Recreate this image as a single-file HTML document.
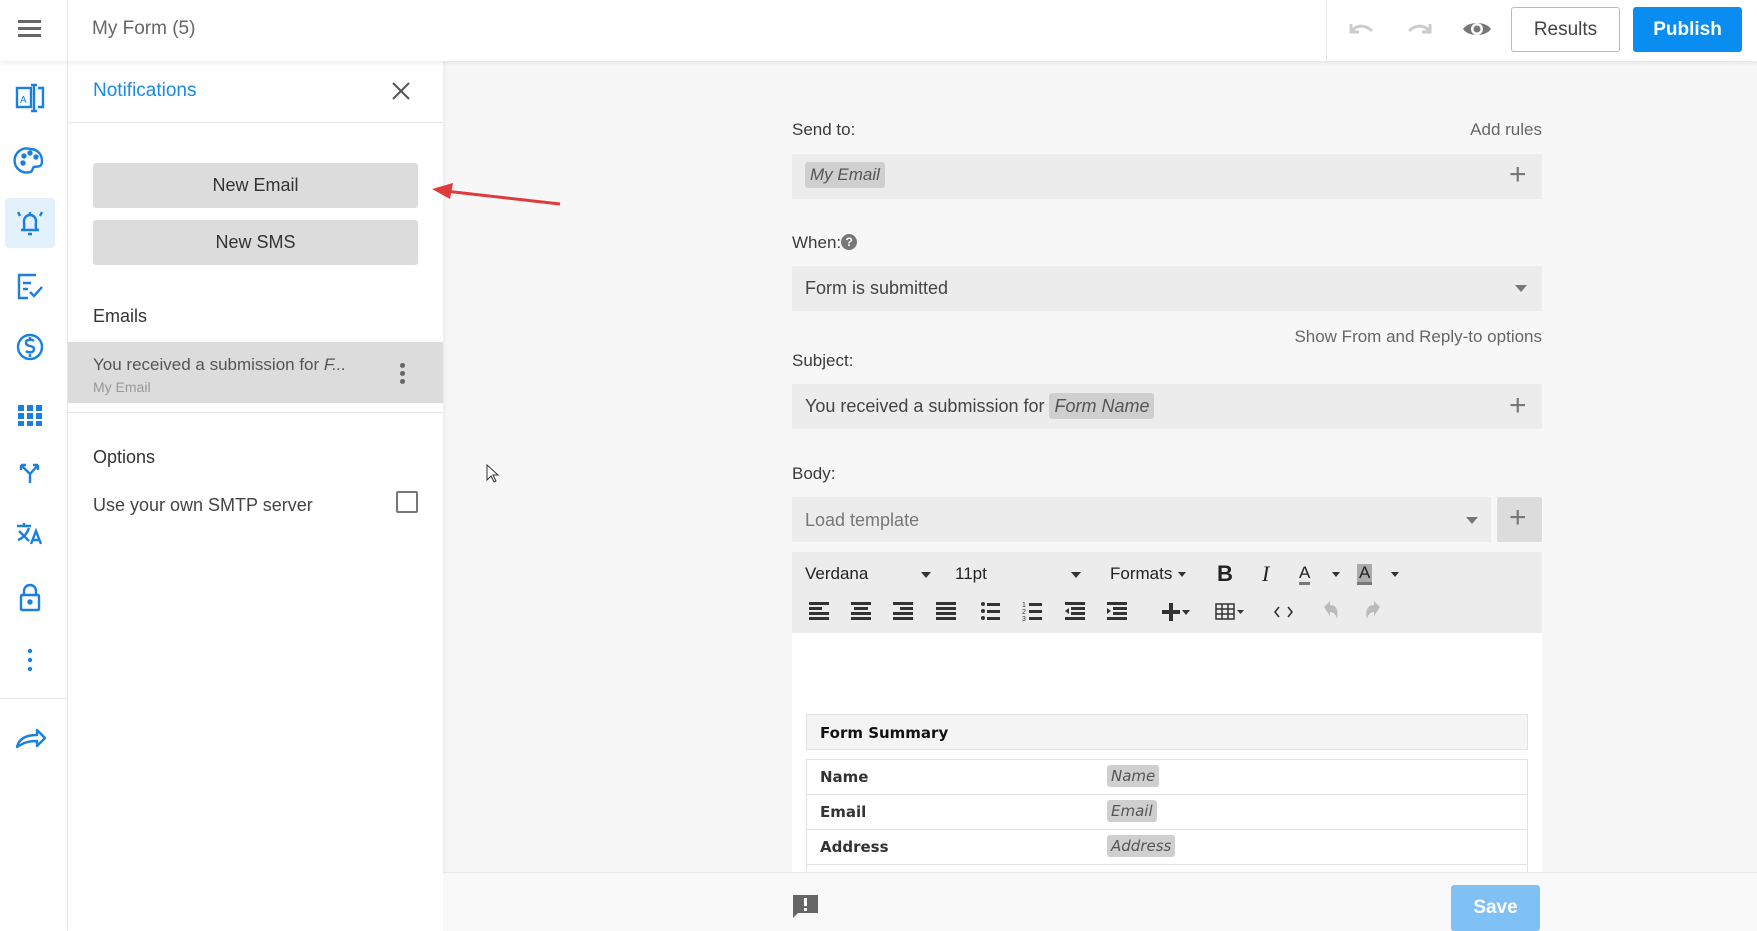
<!DOCTYPE html>
<html><head><meta charset="utf-8"><style>
*{box-sizing:border-box;margin:0;padding:0}
body{width:1757px;height:931px;overflow:hidden;background:#f7f7f7;font-family:"Liberation Sans",sans-serif;position:relative;color:#333}
.a{position:absolute}
.lbl{font-size:17px;color:#3a3a3a}
.fld{background:#ececec;height:45px}
.tag{background:#cfcfcf;border-radius:3px;font-style:italic;color:#555;padding:3px 5px}
.plus{font-size:30px;color:#777;font-weight:300}
.tb{position:absolute;font-size:17px;color:#222}
</style></head><body>
<div class="a" style="left:0;top:0;width:1757px;height:61px;background:#fff;box-shadow:0 2px 4px rgba(0,0,0,.08);z-index:2"></div>
<div class="a" style="left:18px;top:20px;width:23px;height:18px;z-index:3">
<div style="height:3px;background:#666;margin-bottom:4px"></div><div style="height:3px;background:#666;margin-bottom:4px"></div><div style="height:3px;background:#666"></div></div>
<div class="a" style="left:67px;top:0;width:1px;height:61px;background:#e6e6e6;z-index:3"></div>
<div class="a" style="left:92px;top:18px;font-size:19px;color:#666;z-index:3">My Form (5)</div>
<div class="a" style="left:1326px;top:0;width:1px;height:61px;background:#e6e6e6;z-index:3"></div>
<svg class="a" style="left:1347px;top:18px;z-index:3" width="30" height="24" viewBox="0 0 30 24"><path d="M4 6v8h8M5 13c4-6 13-7 20 0" fill="none" stroke="#ccc" stroke-width="3"/></svg>
<svg class="a" style="left:1404px;top:18px;z-index:3" width="30" height="24" viewBox="0 0 30 24"><path d="M26 6v8h-8M25 13c-4-6-13-7-20 0" fill="none" stroke="#ccc" stroke-width="3"/></svg>
<svg class="a" style="left:1462px;top:18px;z-index:3" width="30" height="22" viewBox="0 0 30 22"><path d="M1 11C6 3 24 3 29 11C24 19 6 19 1 11Z" fill="#777"/><circle cx="15" cy="11" r="6" fill="#fff"/><circle cx="15" cy="11" r="3.5" fill="#777"/></svg>
<div class="a" style="left:1511px;top:7px;width:109px;height:45px;border:1px solid #bbb;border-radius:3px;font-size:19px;color:#444;text-align:center;line-height:43px;z-index:3">Results</div>
<div class="a" style="left:1633px;top:7px;width:109px;height:45px;background:#0a8df0;border-radius:3px;font-size:19px;font-weight:bold;color:#fff;text-align:center;line-height:45px;z-index:3">Publish</div>
<div class="a" style="left:0;top:61px;width:68px;height:870px;background:#fff;border-right:1px solid #e6e6e6"></div>
<div class="a" style="left:5px;top:198px;width:50px;height:50px;background:#e3f1fd;border-radius:4px"></div>
<svg class="a" style="left:0;top:61px" width="68" height="700" viewBox="0 61 68 700" fill="none" stroke="#1a7fe0" stroke-width="2.4">
<rect x="17" y="88" width="14" height="19"/><text x="20" y="103" font-size="10" fill="#1a7fe0" stroke="none" font-family="Liberation Sans">A</text><path d="M31 85h6M34 85v26M31 111h6M38 88h5v19h-5"/>
<path d="M30 149a12 12 0 1 0 0 23c3 0 2-4 4-5 3-1 8 1 8-6 0-7-5-12-12-12z"/><circle cx="24" cy="156" r="1.5" fill="#1a7fe0"/><circle cx="30" cy="153" r="1.5" fill="#1a7fe0"/><circle cx="36" cy="157" r="1.5" fill="#1a7fe0"/><circle cx="23" cy="163" r="1.5" fill="#1a7fe0"/>
<path d="M21 230h18M23 230c2-2 1-5 1-9a6 6 0 0 1 12 0c0 4-1 7 1 9M28 234h4M30 212v2M20 216l-2-4M40 216l2-4"/>
<path d="M36 275h-17v23h9M23 283h8M23 289h5M30 292l4 4 8-9"/>
<circle cx="30" cy="347" r="12"/><path d="M34 341c-2-2-8-2-8 2s8 2 8 6-6 4-8 2M30 337v3M30 354v3"/>
<path d="M18 405h6v6h-6zM27 405h6v6h-6zM36 405h6v6h-6zM18 413h6v6h-6zM27 413h6v6h-6zM36 413h6v6h-6zM18 421h6v5h-6zM27 421h6v5h-6zM36 421h6v5h-6z" fill="#1a7fe0" stroke="none"/>
<path d="M30 483v-9l-9-9M21 465v5M21 465h5M30 474l8-9M38 465h-5M38 465v5"/>
<path d="M17 526h14M24 523v3M19 531l10 10M29 528c-2 6-6 10-11 12M31 544l5-13 5 13M33 540h6"/>
<rect x="21" y="595" width="18" height="15" rx="1"/><path d="M24 595v-4a6 6 0 0 1 12 0v4"/><circle cx="30" cy="602" r="1.5" fill="#1a7fe0"/>
<circle cx="30" cy="651" r="2.2" fill="#1a7fe0" stroke="none"/><circle cx="30" cy="660" r="2.2" fill="#1a7fe0" stroke="none"/><circle cx="30" cy="669" r="2.2" fill="#1a7fe0" stroke="none"/>
<path d="M17 747c2-9 10-12 20-12v-5l8 8-8 8v-5c-9 0-14 2-20 6z" stroke-linejoin="round"/>
</svg>
<div class="a" style="left:0;top:698px;width:67px;height:1px;background:#e6e6e6"></div>
<div class="a" style="left:68px;top:61px;width:375px;height:870px;background:#fff;box-shadow:2px 0 4px rgba(0,0,0,.05)"></div>
<div class="a" style="left:93px;top:80px;font-size:19px;color:#1a8ae6">Notifications</div>
<svg class="a" style="left:391px;top:81px" width="20" height="20"><path d="M2 2L18 18M18 2L2 18" stroke="#555" stroke-width="2"/></svg>
<div class="a" style="left:68px;top:122px;width:375px;height:1px;background:#e8e8e8"></div>
<div class="a" style="left:93px;top:163px;width:325px;height:45px;background:#dcdcdc;border-radius:3px;text-align:center;line-height:45px;font-size:18px;color:#333">New Email</div>
<div class="a" style="left:93px;top:220px;width:325px;height:45px;background:#dcdcdc;border-radius:3px;text-align:center;line-height:45px;font-size:18px;color:#333">New SMS</div>
<div class="a" style="left:93px;top:306px;font-size:18px;color:#333">Emails</div>
<div class="a" style="left:68px;top:342px;width:375px;height:61px;background:#dcdcdc"></div>
<div class="a" style="left:93px;top:355px;font-size:17px;color:#555">You received a submission for <i>F...</i></div>
<div class="a" style="left:93px;top:379px;font-size:14px;color:#999">My Email</div>
<div class="a" style="left:400px;top:363px;width:5px"><div style="width:5px;height:5px;border-radius:50%;background:#666;margin-bottom:3px"></div><div style="width:5px;height:5px;border-radius:50%;background:#666;margin-bottom:3px"></div><div style="width:5px;height:5px;border-radius:50%;background:#666"></div></div>
<div class="a" style="left:68px;top:412px;width:375px;height:1px;background:#e8e8e8"></div>
<div class="a" style="left:93px;top:447px;font-size:18px;color:#333">Options</div>
<div class="a" style="left:93px;top:495px;font-size:18px;color:#444">Use your own SMTP server</div>
<div class="a" style="left:396px;top:491px;width:22px;height:22px;border:2px solid #777;border-radius:2px"></div>
<svg class="a" style="left:425px;top:180px" width="140" height="30"><path d="M135 24L20 11" stroke="#e03a3a" stroke-width="3"/><path d="M7 9L28 3L25 19Z" fill="#e03a3a"/></svg>
<svg class="a" style="left:486px;top:464px" width="14" height="20"><path d="M1 1v15l4-4 3 6 2-1-3-6h5z" fill="#fff" stroke="#333"/></svg>
<div class="a lbl" style="left:792px;top:120px">Send to:</div>
<div class="a lbl" style="right:215px;top:120px;color:#666">Add rules</div>
<div class="a fld" style="left:792px;top:154px;width:750px"></div>
<div class="a tag" style="left:805px;top:162px;font-size:17px">My Email</div>
<div class="a plus" style="left:1509px;top:158px">+</div>
<div class="a lbl" style="left:792px;top:233px">When:<span style="display:inline-block;width:16px;height:16px;border-radius:50%;background:#777;color:#fff;font-size:12px;text-align:center;line-height:16px;font-weight:bold;vertical-align:2px">?</span></div>
<div class="a fld" style="left:792px;top:266px;width:750px"></div>
<div class="a" style="left:805px;top:278px;font-size:18px;color:#444">Form is submitted</div>
<div class="a" style="left:1515px;top:285px;border-left:6px solid transparent;border-right:6px solid transparent;border-top:7px solid #777"></div>
<div class="a lbl" style="right:215px;top:327px;color:#666">Show From and Reply-to options</div>
<div class="a lbl" style="left:792px;top:351px">Subject:</div>
<div class="a fld" style="left:792px;top:384px;width:750px"></div>
<div class="a" style="left:805px;top:396px;font-size:18px;color:#444">You received a submission for <span class="tag" style="padding:3px 5px">Form Name</span></div>
<div class="a plus" style="left:1509px;top:389px">+</div>
<div class="a lbl" style="left:792px;top:464px">Body:</div>
<div class="a fld" style="left:792px;top:497px;width:699px"></div>
<div class="a" style="left:805px;top:510px;font-size:18px;color:#777">Load template</div>
<div class="a" style="left:1466px;top:517px;border-left:6px solid transparent;border-right:6px solid transparent;border-top:7px solid #777"></div>
<div class="a" style="left:1497px;top:497px;width:45px;height:45px;background:#dcdcdc;border-radius:2px"></div>
<div class="a plus" style="left:1509px;top:501px">+</div>
<div class="a" style="left:792px;top:552px;width:750px;height:320px;background:#fff"></div>
<div class="a" style="left:792px;top:552px;width:750px;height:81px;background:#ececec"></div>
<div class="tb" style="left:805px;top:564px">Verdana</div><div class="a" style="left:921px;top:572px;border:5px solid transparent;border-top:6px solid #333"></div>
<div class="tb" style="left:955px;top:564px">11pt</div><div class="a" style="left:1071px;top:572px;border:5px solid transparent;border-top:6px solid #333"></div>
<div class="tb" style="left:1110px;top:564px">Formats</div><div class="a" style="left:1178px;top:572px;border:4px solid transparent;border-top:5px solid #333"></div>
<div class="tb" style="left:1217px;top:561px;font-weight:bold;font-size:22px">B</div>
<div class="tb" style="left:1262px;top:561px;font-style:italic;font-size:22px;font-family:'Liberation Serif',serif">I</div>
<div class="tb" style="left:1299px;top:564px;font-size:17px;border-bottom:3px solid #777;line-height:18px">A</div><div class="a" style="left:1332px;top:572px;border:4px solid transparent;border-top:5px solid #333"></div>
<div class="tb" style="left:1357px;top:564px;font-size:17px;background:#aaa;border-bottom:3px solid #777;line-height:18px;padding:0 2px">A</div><div class="a" style="left:1391px;top:572px;border:4px solid transparent;border-top:5px solid #333"></div>
<svg class="a" style="left:800px;top:598px" width="580" height="28" fill="#333">
<g><rect x="9" y="4" width="20" height="3"/><rect x="9" y="9" width="13" height="3"/><rect x="9" y="14" width="20" height="3"/><rect x="9" y="19" width="20" height="3"/></g>
<g transform="translate(42 0)"><rect x="9" y="4" width="20" height="3"/><rect x="12" y="9" width="14" height="3"/><rect x="9" y="14" width="20" height="3"/><rect x="9" y="19" width="20" height="3"/></g>
<g transform="translate(84 0)"><rect x="9" y="4" width="20" height="3"/><rect x="16" y="9" width="13" height="3"/><rect x="9" y="14" width="20" height="3"/><rect x="9" y="19" width="20" height="3"/></g>
<g transform="translate(127 0)"><rect x="9" y="4" width="20" height="3"/><rect x="9" y="9" width="20" height="3"/><rect x="9" y="14" width="20" height="3"/><rect x="9" y="19" width="20" height="3"/></g>
<g transform="translate(172 0)"><circle cx="11" cy="6" r="2"/><circle cx="11" cy="13" r="2"/><circle cx="11" cy="20" r="2"/><rect x="15" y="5" width="13" height="3"/><rect x="15" y="12" width="13" height="3"/><rect x="15" y="19" width="13" height="3"/></g>
<g transform="translate(214 0)"><rect x="15" y="5" width="13" height="3"/><rect x="15" y="12" width="13" height="3"/><rect x="15" y="19" width="13" height="3"/><text x="8" y="9" font-size="7">1</text><text x="8" y="16" font-size="7">2</text><text x="8" y="23" font-size="7">3</text></g>
<g transform="translate(256 0)"><rect x="9" y="4" width="20" height="3"/><rect x="15" y="9" width="14" height="3"/><rect x="15" y="14" width="14" height="3"/><rect x="9" y="19" width="20" height="3"/><path d="M9 13l4-3v6z"/></g>
<g transform="translate(298 0)"><rect x="9" y="4" width="20" height="3"/><rect x="15" y="9" width="14" height="3"/><rect x="15" y="14" width="14" height="3"/><rect x="9" y="19" width="20" height="3"/><path d="M13 13l-4-3v6z"/></g>
<g transform="translate(358 0)"><rect x="4" y="12" width="18" height="4"/><rect x="11" y="5" width="4" height="18"/><path d="M24 12h8l-4 5z"/></g>
<g transform="translate(412 0)" fill="none" stroke="#333" stroke-width="1.5"><rect x="4" y="6" width="18" height="15"/><path d="M4 11h18M4 16h18M10 6v15M16 6v15"/><path d="M25 12h7l-3.5 4z" fill="#333" stroke="none"/></g>
<g transform="translate(470 0)" fill="none" stroke="#333" stroke-width="1.6"><path d="M9 9l-4 5 4 5M18 9l4 5-4 5"/></g>
<g transform="translate(516 0)" fill="#bbb"><path d="M8 9l6-6v4c6 0 9 5 7 14-1-5-4-7-7-7v4z"/></g>
<g transform="translate(558 0)" fill="#bbb"><path d="M22 9l-6-6v4c-6 0-9 5-7 14 1-5 4-7 7-7v4z"/></g>
</svg>
<div class="a" style="left:806px;top:714px;width:722px;height:36px;background:#f4f4f4;border:1px solid #e2e2e2;font-size:15px;font-weight:bold;color:#111;padding:9px 13px;font-family:'DejaVu Sans',sans-serif">Form Summary</div>
<div class="a" style="left:806px;top:759px;width:722px;height:120px;border:1px solid #e2e2e2;font-family:'DejaVu Sans',sans-serif;font-size:15px">
<div style="height:35px;border-bottom:1px solid #e2e2e2;position:relative"><b style="position:absolute;left:13px;top:8px">Name</b><span class="tag" style="position:absolute;left:300px;top:5px;font-size:15px;padding:2px 4px">Name</span></div>
<div style="height:35px;border-bottom:1px solid #e2e2e2;position:relative"><b style="position:absolute;left:13px;top:8px">Email</b><span class="tag" style="position:absolute;left:300px;top:5px;font-size:15px;padding:2px 4px">Email</span></div>
<div style="height:35px;border-bottom:1px solid #e2e2e2;position:relative"><b style="position:absolute;left:13px;top:8px">Address</b><span class="tag" style="position:absolute;left:300px;top:5px;font-size:15px;padding:2px 4px">Address</span></div>
</div>
<div class="a" style="left:443px;top:872px;width:1314px;height:59px;background:#f9f9f9;border-top:1px solid #e6e6e6"></div>
<svg class="a" style="left:792px;top:893px" width="27" height="26"><path d="M1 2h25v18H6l-5 5z" fill="#666"/><rect x="12" y="5" width="3" height="8" fill="#fff"/><rect x="12" y="15" width="3" height="3" fill="#fff"/></svg>
<div class="a" style="left:1451px;top:885px;width:89px;height:46px;background:#7fc1f5;border-radius:3px;color:#fff;font-weight:bold;font-size:19px;text-align:center;line-height:46px">Save</div>
</body></html>
